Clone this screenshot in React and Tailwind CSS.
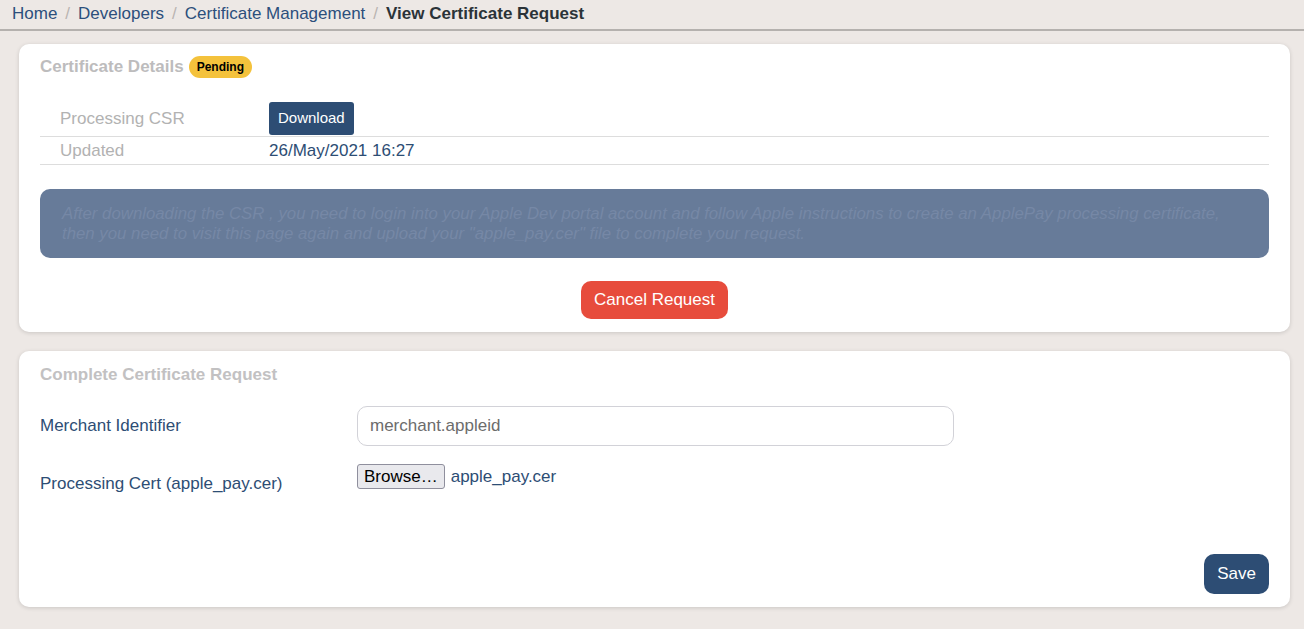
const crumbs = ['Home', 'Developers', 'Certificate Management']

export default function App() {
  return (
    <div className="min-h-screen bg-[#ede8e5] font-['Liberation_Sans',Arial,sans-serif]">
      <nav className="flex h-[31px] items-center border-b-2 border-[#b5b1ae] px-3 pb-[2px] text-[17px]">
        {crumbs.map((c) => (
          <span key={c} className="flex items-center">
            <a className="text-[#2c4f7c]" href="#">{c}</a>
            <span className="mx-2 text-[#b9b4b1]">/</span>
          </span>
        ))}
        <span className="font-bold text-[#2b3338]">View Certificate Request</span>
      </nav>

      <div className="flex flex-col gap-[19px] px-[19px] pt-[13px] pb-[23px] pr-[14px]">
        <section className="rounded-[10px] bg-white px-[21px] pt-[12px] pb-[13px] shadow-[0_1px_4px_rgba(0,0,0,0.15)]">
          <div className="flex h-[22px] items-center gap-[5px]">
            <h2 className="text-[17px] leading-[20px] font-bold text-[#bdbcbd]">Certificate Details</h2>
            <span className="rounded-full bg-[#f4c23c] px-[8px] py-[3px] text-[12px] leading-[16px] font-bold text-black">Pending</span>
          </div>

          <div className="mt-[23px] text-[17px]">
            <div className="flex h-[36px] items-center border-b border-[#dddddd] pl-[20px]">
              <span className="w-[209px] text-[#b2b2b2]">Processing CSR</span>
              <button className="h-[33px] rounded-[3px] bg-[#2d4d74] px-[9px] text-[15px] text-white">Download</button>
            </div>
            <div className="flex h-[28px] items-center border-b border-[#dddddd] pl-[20px]">
              <span className="w-[209px] text-[#b2b2b2]">Updated</span>
              <span className="text-[#2d4d74]">26/May/2021 16:27</span>
            </div>
          </div>

          <div className="mt-[24px] rounded-[10px] bg-[#677b99] px-[22px] pt-[15px] pb-[14px] text-[16.8px] leading-[20px] italic text-[#7688a6]">
            After downloading the CSR , you need to login into your Apple Dev portal account and follow Apple instructions to create an ApplePay processing certificate,
            <br />
            then you need to visit this page again and upload your "apple_pay.cer" file to complete your request.
          </div>

          <div className="mt-[23px] flex justify-center">
            <button className="h-[38px] rounded-[10px] bg-[#e74c3c] px-[13px] text-[17px] text-white">Cancel Request</button>
          </div>
        </section>

        <section className="rounded-[10px] bg-white px-[21px] pt-[14px] pb-[13px] shadow-[0_1px_4px_rgba(0,0,0,0.15)]">
          <h2 className="h-[20px] text-[17px] leading-[20px] font-bold text-[#c2c1c2]">Complete Certificate Request</h2>

          <div className="mt-[21px] flex items-center text-[17px]">
            <label className="w-[317px] text-[#2d4d74]">Merchant Identifier</label>
            <input
              className="h-[40px] w-[597px] rounded-[10px] border border-[#d2d2d8] px-[12px] text-[17px] text-[#555] outline-none placeholder:text-[#6c6c6c]"
              placeholder="merchant.appleid"
            />
          </div>

          <div className="mt-[18px] flex items-start text-[17px]">
            <label className="mt-[7px] w-[317px] text-[#2d4d74]">Processing Cert (apple_pay.cer)</label>
            <div className="flex items-center gap-[6px]">
              <span className="flex h-[25px] items-center rounded-[3px] border border-[#8f8f9d] bg-[#e9e9ed] px-[6px] text-[17px] text-black">Browse…</span>
              <span className="text-[#2d4d74]">apple_pay.cer</span>
            </div>
          </div>

          <div className="mt-[57px] flex justify-end">
            <button className="h-[40px] rounded-[10px] bg-[#2d4d74] px-[13px] text-[17px] text-white">Save</button>
          </div>
        </section>
      </div>
    </div>
  )
}
